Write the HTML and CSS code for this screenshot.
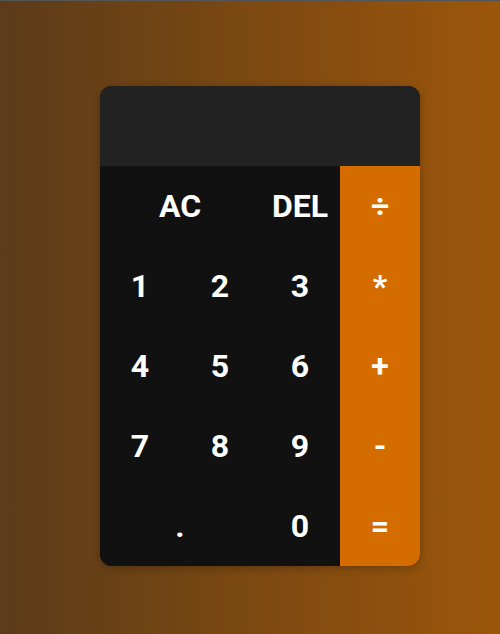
FILE: index.html
```html
<!DOCTYPE html>
<html lang="en">
<head>
    <meta charset="UTF-8">
    <meta name="viewport" content="width=device-width, initial-scale=1.0">
    <title>Calculator</title>
    <link rel="stylesheet" href="styles.css">
</head>
<body>

<div class="calculator">
    <div class="output">
        <div class="previous"></div>
        <div class="current"></div>
    </div>
    <button class="span-two">AC</button>
    <button>DEL</button>
    <button class="operator">÷</button>
    <button>1</button>
    <button>2</button>
    <button>3</button>
    <button class="operator">*</button>
    <button>4</button>
    <button>5</button>
    <button>6</button>
    <button class="operator">+</button>
    <button>7</button>
    <button>8</button>
    <button>9</button>
    <button class="operator">-</button>
    <button class="span-two">.</button>
    <button>0</button>
    <button class="operator">=</button>
</div>

</body>
</html>
```

FILE: styles.css
```css
*, *::before, *::after {
    box-sizing: border-box;
}
body {
    margin: 0;
    padding: 0 0 0 20px;
    min-height: 100vh;
    border-top: 1px solid #555;
    font-family: Roboto, "Liberation Sans", sans-serif;
    background: linear-gradient(to right, #5b3b19, #9c560b);
}
.calculator {
    display: grid;
    grid-template-columns: repeat(4, 80px);
    grid-template-rows: 80px repeat(5, 80px);
    width: 320px;
    margin: 85px auto 0;
    border-radius: 12px;
    overflow: hidden;
    background-color: #111;
    box-shadow: 0 2px 8px rgba(0, 0, 0, 0.25);
}
.output {
    grid-column: 1 / -1;
    background-color: #222;
}
.calculator button {
    border: none;
    background-color: #111;
    color: white;
    font-family: inherit;
    font-size: 32px;
    font-weight: bold;
    cursor: pointer;
    outline: none;
}
.calculator button:hover {
    background-color: #1c1c1c;
}
.span-two {
    grid-column: span 2;
}
.calculator .operator {
    background-color: #d46c00;
}
.calculator .operator:hover {
    background-color: #e07a10;
}
```
